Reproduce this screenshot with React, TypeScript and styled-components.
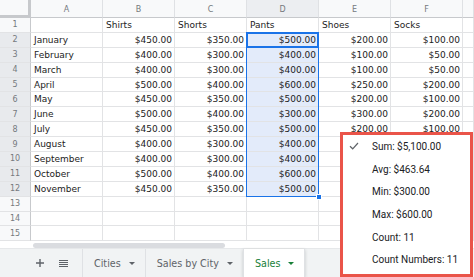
import React from "react";
import styled, { createGlobalStyle } from "styled-components";

const Global = createGlobalStyle`
  html, body { margin: 0; padding: 0; background: #fff; }
  body { font-family: "DejaVu Sans", Verdana, sans-serif; }
  * { box-sizing: border-box; }
`;

const Page = styled.div`
  position: relative;
  width: 474px;
  height: 277px;
  overflow: hidden;
  display: flex;
  flex-direction: column;
  background: #fff;
`;

const Sheet = styled.div`
  display: grid;
  grid-template-columns: 31px repeat(6, 72px) 1fr;
  grid-template-rows: 18px repeat(15, 14.9px);
  height: 242px;
  flex: none;
`;

const Corner = styled.div`
  grid-row: 1;
  grid-column: 1;
  background: #f8f9fa;
  border-right: 3px solid #c7c9cc;
  border-bottom: 3px solid #c7c9cc;
`;

const ColHead = styled.div<{ $c: number; $on?: boolean }>`
  grid-row: 1;
  grid-column: ${(p) => p.$c};
  background: ${(p) => (p.$on ? "#eceef1" : "#f8f9fa")};
  border-right: 1px solid #dfe1e4;
  border-bottom: 1px solid #c7c9cc;
  display: flex;
  align-items: center;
  justify-content: center;
  font-size: 8px;
  color: #75797d;
  padding-top: 1px;
`;

const RowHead = styled.div<{ $r: number; $on?: boolean }>`
  grid-row: ${(p) => p.$r};
  grid-column: 1;
  background: ${(p) => (p.$on ? "#e8eaed" : "#f8f9fa")};
  border-right: 1px solid #c7c9cc;
  border-bottom: 1px solid #e2e3e5;
  display: flex;
  align-items: center;
  justify-content: center;
  font-size: 8px;
  color: #75797d;
`;

const Cell = styled.div<{ $r: number; $c: number; $num?: boolean; $sel?: boolean }>`
  grid-row: ${(p) => p.$r};
  grid-column: ${(p) => p.$c};
  background: ${(p) => (p.$sel ? "#e3ebfa" : "#fff")};
  border-right: 1px solid #e2e3e5;
  border-bottom: 1px solid #e2e3e5;
  display: flex;
  align-items: center;
  justify-content: ${(p) => (p.$num ? "flex-end" : "flex-start")};
  padding: 0 2px 0 3px;
  font-size: 9px;
  color: #222;
  white-space: nowrap;
  overflow: hidden;
`;

const Range = styled.div`
  grid-row: 3 / 14;
  grid-column: 5;
  margin: -1px 0 0 -1px;
  border: 1px solid #1a73e8;
  position: relative;
  z-index: 2;
  pointer-events: none;
`;

const Active = styled.div`
  grid-row: 3;
  grid-column: 5;
  margin: -1px 0 0 -1px;
  border: 2px solid #1a73e8;
  z-index: 3;
  pointer-events: none;
`;

const Handle = styled.div`
  position: absolute;
  right: -4px;
  bottom: -4px;
  width: 6px;
  height: 6px;
  background: #1a73e8;
  border: 1px solid #fff;
`;

const ScrollRow = styled.div`
  height: 6px;
  flex: none;
  padding: 1px 0 0 33px;
`;

const Thumb = styled.div`
  width: 192px;
  height: 5px;
  border-radius: 3px;
  background: #dadce0;
`;

const TabBar = styled.div`
  flex: 1;
  display: flex;
  align-items: stretch;
  background: #f1f3f4;
  border-top: 1px solid #e6e8ea;
`;

const Controls = styled.div`
  width: 82px;
  display: flex;
  align-items: center;
  padding-left: 35px;
  gap: 14px;
  color: #5f6368;
`;

const Tab = styled.div<{ $active?: boolean }>`
  display: flex;
  align-items: center;
  gap: 8px;
  padding: 0 10px 0 11px;
  border-left: 1px solid #dfe1e4;
  font-size: 9.6px;
  color: ${(p) => (p.$active ? "#188038" : "#5f6368")};
  background: ${(p) => (p.$active ? "#fff" : "transparent")};
  box-shadow: ${(p) => (p.$active ? "0 1px 3px rgba(60,64,67,0.25)" : "none")};
  border-right: ${(p) => (p.$active ? "1px solid #dfe1e4" : "none")};
`;

const Caret = styled.span`
  width: 0;
  height: 0;
  border-left: 3px solid transparent;
  border-right: 3px solid transparent;
  border-top: 3px solid currentColor;
`;

const Popup = styled.div`
  position: absolute;
  left: 340px;
  top: 132px;
  width: 133px;
  height: 145px;
  border: 3px solid #ea5449;
  background: #fff;
  z-index: 10;
  display: flex;
  flex-direction: column;
`;

const MenuItem = styled.div`
  position: relative;
  height: 22.7px;
  flex: none;
  display: flex;
  align-items: center;
  padding-left: 29px;
  font-family: Roboto, "Liberation Sans", sans-serif;
  font-size: 10px;
  color: #202124;
  white-space: nowrap;
`;

const Check = styled.svg`
  position: absolute;
  left: 6px;
  top: 7px;
`;

const cols = ["A", "B", "C", "D", "E", "F", ""];
const heads = ["", "Shirts", "Shorts", "Pants", "Shoes", "Socks"];
const data: [string, (number | null)[]][] = [
  ["January", [450, 350, 500, 200, 100]],
  ["February", [400, 300, 400, 100, 50]],
  ["March", [400, 300, 400, 100, 50]],
  ["April", [500, 400, 600, 250, 200]],
  ["May", [450, 350, 500, 200, 100]],
  ["June", [500, 400, 300, 300, 200]],
  ["July", [450, 350, 500, 200, 100]],
  ["August", [400, 300, 400, null, null]],
  ["September", [400, 300, 400, null, null]],
  ["October", [500, 400, 600, null, null]],
  ["November", [450, 350, 500, null, null]],
];

const money = (n: number | null) => (n == null ? "" : "$" + n.toFixed(2));

const menu = [
  "Sum: $5,100.00",
  "Avg: $463.64",
  "Min: $300.00",
  "Max: $600.00",
  "Count: 11",
  "Count Numbers: 11",
];

export default function App() {
  const cells: React.ReactNode[] = [];
  for (let r = 1; r <= 15; r++) {
    const gr = r + 1;
    const on = r >= 2 && r <= 12;
    cells.push(
      <RowHead key={"h" + r} $r={gr} $on={on}>
        {r}
      </RowHead>
    );
    for (let c = 0; c < 7; c++) {
      const gc = c + 2;
      let text = "";
      let num = false;
      if (r === 1) text = heads[c] ?? "";
      else if (r <= 12) {
        const row = data[r - 2];
        if (c === 0) text = row[0];
        else if (c <= 5) {
          text = money(row[1][c - 1]);
          num = true;
        }
      }
      cells.push(
        <Cell key={r + "-" + c} $r={gr} $c={gc} $num={num} $sel={c === 3 && on}>
          {text}
        </Cell>
      );
    }
  }

  return (
    <Page>
      <Global />
      <Sheet>
        <Corner />
        {cols.map((l, i) => (
          <ColHead key={"c" + i} $c={i + 2} $on={l === "D"}>
            {l}
          </ColHead>
        ))}
        {cells}
        <Range>
          <Handle />
        </Range>
        <Active />
      </Sheet>
      <ScrollRow>
        <Thumb />
      </ScrollRow>
      <TabBar>
        <Controls>
          <svg width="10" height="10" viewBox="0 0 10 10">
            <path d="M5 1v8M1 5h8" stroke="#5f6368" strokeWidth="1.4" />
          </svg>
          <svg width="9" height="9" viewBox="0 0 9 9">
            <path d="M0 1.5h9M0 3.5h9M0 5.5h9M0 7.5h9" stroke="#5f6368" strokeWidth="1" />
          </svg>
        </Controls>
        <Tab>
          Cities <Caret />
        </Tab>
        <Tab>
          Sales by City <Caret />
        </Tab>
        <Tab $active>
          Sales <Caret />
        </Tab>
      </TabBar>
      <Popup>
        {menu.map((m, i) => (
          <MenuItem key={m}>
            {i === 0 && (
              <Check width="10" height="8" viewBox="0 0 10 8">
                <path d="M1 4.2l2.7 2.6L9 1" fill="none" stroke="#5f6368" strokeWidth="1.2" />
              </Check>
            )}
            {m}
          </MenuItem>
        ))}
      </Popup>
    </Page>
  );
}
